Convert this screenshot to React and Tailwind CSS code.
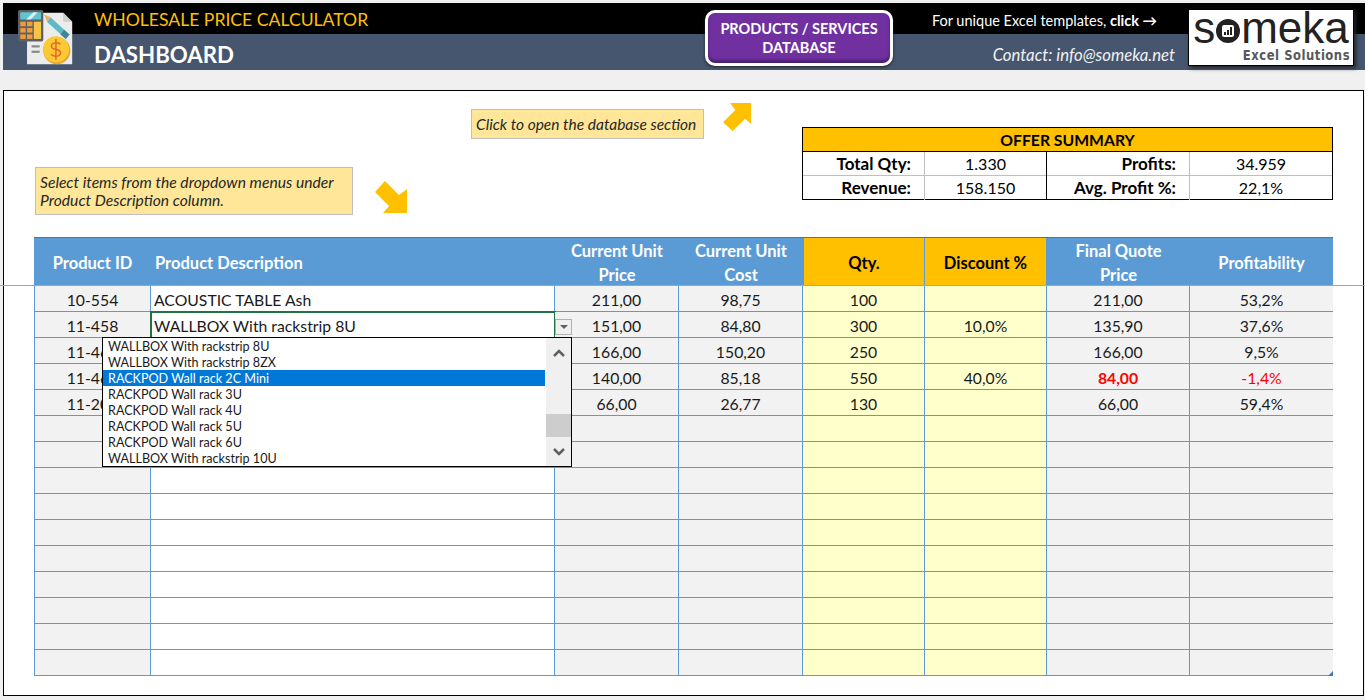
const FONT = "font-['Lato','Liberation_Sans',sans-serif]"

const COLS = 'grid grid-cols-[117px_404px_124px_124px_122px_122px_143px_143px]'

const rows = [
  ['10-554', 'ACOUSTIC TABLE Ash', '211,00', '98,75', '100', '', '211,00', '53,2%'],
  ['11-458', 'WALLBOX With rackstrip 8U', '151,00', '84,80', '300', '10,0%', '135,90', '37,6%'],
  ['11-460', '', '166,00', '150,20', '250', '', '166,00', '9,5%'],
  ['11-463', '', '140,00', '85,18', '550', '40,0%', '84,00', '-1,4%', true],
  ['11-205', '', '66,00', '26,77', '130', '', '66,00', '59,4%'],
]
for (let i = 0; i < 10; i++) rows.push(['', '', '', '', '', '', '', ''])

const options = [
  'WALLBOX With rackstrip 8U',
  'WALLBOX With rackstrip 8ZX',
  'RACKPOD Wall rack 2C Mini',
  'RACKPOD Wall rack 3U',
  'RACKPOD Wall rack 4U',
  'RACKPOD Wall rack 5U',
  'RACKPOD Wall rack 6U',
  'WALLBOX With rackstrip 10U',
]

function AppIcon() {
  return (
    <svg width="56" height="56" viewBox="0 0 62 62" className="shrink-0">
      <path d="M10 3 H50 L60 13 V60 H10 Z" fill="#ececec" />
      <path d="M50 3 L60 13 H50 Z" fill="#cfcfcf" />
      <rect x="0" y="0" width="28" height="35" rx="2" fill="#5d6166" />
      <rect x="2.500" y="2.500" width="23" height="8" fill="#62c4cf" />
      <path d="M9 10.500 L17 2.500 H22 L14 10.500 Z" fill="#d4f0f2" />
      {[0, 1, 2].map((r) =>
        [0, 1].map((c) => <rect key={`${r}${c}`} x={2.500 + c * 7.500} y={13 + r * 7} width="6" height="5" fill="#f29b38" />)
      )}
      <rect x="17.500" y="13" width="8" height="19" fill="#f6c544" />
      <path d="M36 8 L57 27 L53 32 L32 13 Z" fill="#5fb9c6" />
      <path d="M29 5 L36 8 L32 13 Z" fill="#f0b060" />
      <path d="M51 22 L57 27 L53 32 L47 27 Z" fill="#3f8796" />
      <rect x="15" y="39" width="9" height="2.500" fill="#8a8a8a" />
      <rect x="15" y="45" width="9" height="2.500" fill="#8a8a8a" />
      <circle cx="43" cy="45" r="15" fill="#e5a92b" />
      <circle cx="42" cy="43.500" r="14.500" fill="#fbc934" />
      <path d="M47 38 C45 35.500 37 35.500 37 40 C37 45 47 42 47 47.500 C47 52 39 52 36.500 49 M42 32 V55" fill="none" stroke="#e8622c" strokeWidth="1.600" />
    </svg>
  )
}

function CornerArrow({ flip }) {
  const size = flip ? 29 : 33
  return (
    <svg width={size} height={size} viewBox="0 0 33 33" className={flip ? '-rotate-90' : ''}>
      <path d="M0 11 L10 0 L24 14 L32 8 V32 H8 L14 25 Z" fill="#ffc000" />
    </svg>
  )
}

function Cell({ className = '', children }) {
  return <div className={`flex items-start justify-center overflow-hidden whitespace-nowrap border-r border-b border-[#5b9bd5] pt-[5px] text-[15.750px] leading-[18px] text-[#1a1a1a] ${className}`}>{children}</div>
}

function Head({ className = 'bg-[#5b9bd5] text-white', children }) {
  return <div className={`flex items-center justify-center pt-px text-center font-bold text-[16.500px] leading-[24px] ${className}`}>{children}</div>
}

function Dropdown() {
  return (
    <div className="absolute left-[68px] top-[100px] z-10 flex h-[130px] w-[470px] border border-black bg-white">
      <div className="flex-1 pr-px">
        {options.map((o, i) => (
          <div key={o} className={`h-4 pl-[5px] text-[12.600px] leading-[18px] ${i === 2 ? 'bg-[#0078d7] text-white' : 'text-[#1a1a1a]'}`}>{o}</div>
        ))}
      </div>
      <div className="flex w-[25px] flex-col items-center bg-[#f0f0f0]">
        <svg width="14" height="30" viewBox="0 0 14 30" className="shrink-0"><path d="M2 18 L7 13 L12 18" fill="none" stroke="#606060" strokeWidth="2.500" /></svg>
        <div className="mt-[46px] h-[23px] w-full shrink-0 bg-[#cdcdcd]" />
        <svg width="14" height="28" viewBox="0 0 14 28" className="mt-auto shrink-0"><path d="M2 11 L7 16 L12 11" fill="none" stroke="#606060" strokeWidth="2.500" /></svg>
      </div>
    </div>
  )
}

function PriceTable() {
  return (
    <div className="relative mx-[30px] w-[1299px] border-r border-[#4472c4]">
      <div className={`${COLS} h-[49px] border-t border-[#4472c4]`}>
        <Head>Product ID</Head>
        <Head className="justify-start! bg-[#5b9bd5] pl-1 text-white">Product Description</Head>
        <Head>Current Unit<br />Price</Head>
        <Head>Current Unit<br />Cost</Head>
        <Head className="border-x border-[#5b9bd5] bg-[#ffc000] text-black">Qty.</Head>
        <Head className="border-r border-[#5b9bd5] bg-[#ffc000] text-black">Discount %</Head>
        <Head>Final Quote<br />Price</Head>
        <Head>Profitability</Head>
      </div>
      {rows.map((r, i) => (
        <div key={i} className={`${COLS} h-[26px]`}>
          <Cell className="border-l bg-[#f2f2f2]">{r[0]}</Cell>
          <Cell className={`justify-start! bg-white pl-[3px] ${i === 1 ? 'outline-2 -outline-offset-1 outline-[#217346]' : ''}`}>{r[1]}</Cell>
          <Cell className="bg-[#f2f2f2]">{r[2]}</Cell>
          <Cell className="bg-[#f2f2f2]">{r[3]}</Cell>
          <Cell className="bg-[#ffffcc]">{r[4]}</Cell>
          <Cell className="bg-[#ffffcc]">{r[5]}</Cell>
          <Cell className={`bg-[#f2f2f2] ${r[8] ? 'font-bold text-[#ff0000]' : ''}`}>{r[6]}</Cell>
          <Cell className={`bg-[#f2f2f2] border-r-0 ${r[8] ? 'text-[#ff0000]' : ''}`}>{r[7]}</Cell>
        </div>
      ))}
      <div className="absolute bottom-0 right-[-1px] h-[5px] w-[5px] bg-[#4472c4] [clip-path:polygon(100%_0,100%_100%,0_100%)]" />
      <div className="absolute left-[521px] top-[82px] z-10 flex h-[16px] w-[17px] items-center justify-center border border-[#b0b0b0] bg-[#f0f0f0]">
        <div className="h-0 w-0 border-x-[4px] border-t-[4px] border-x-transparent border-t-[#606060]" />
      </div>
      <Dropdown />
    </div>
  )
}

function SummaryRow({ a, b, c, d, last }) {
  return (
    <div className={`grid h-6 grid-cols-[122px_122px_143px_1fr] text-[16px] ${last ? '' : 'border-b border-[#bfbfbf]'}`}>
      <div className="border-r border-[#bfbfbf] pr-[13px] text-right text-[17px] font-bold leading-[24px]">{a}</div>
      <div className="border-r border-black text-center leading-[24px]">{b}</div>
      <div className="border-r border-[#bfbfbf] pr-[13px] text-right text-[17px] font-bold leading-[24px]">{c}</div>
      <div className="text-center leading-[24px]">{d}</div>
    </div>
  )
}

export default function App() {
  return (
    <div className={`relative h-[700px] w-[1365px] overflow-hidden bg-[#f0f0f0] pl-[3px] pt-[3px] ${FONT}`}>
      <header className="flex h-[67px] bg-[linear-gradient(#000_31px,#46566e_31px)]">
        <div className="pl-[15px] pt-[7px]"><AppIcon /></div>
        <div className="w-[631px] pl-[20px]">
          <div className="h-[31px] text-[17.600px] leading-[34px] text-[#ffc000]">WHOLESALE PRICE CALCULATOR</div>
          <div className="text-[22.250px] font-bold leading-[42px] text-white">DASHBOARD</div>
        </div>
        <div className="mt-[7px] flex h-[56px] w-[188px] items-center justify-center rounded-[10px] border-[3px] border-white bg-[#7030a0] text-center text-[14.500px] font-bold leading-[19px] text-white shadow-[inset_0_-3px_3px_#4a1f6e,0_1px_3px_#222]">
          PRODUCTS / SERVICES<br />DATABASE
        </div>
        <div className="w-[295px] pr-[13px] text-right text-white">
          <div className="h-[31px] pr-[18px] text-[14.500px] leading-[35px]">For unique Excel templates, <b>click →</b></div>
          <div className="text-[16.750px] italic leading-[42px] text-[#f2f2f2]">Contact: info@someka.net</div>
        </div>
        <div className="mt-[6px] flex h-[57px] w-[166px] flex-col items-center border border-black bg-white shadow-[2px_2px_4px_#222]">
          <div className="flex h-[36px] items-center font-['Liberation_Sans',sans-serif] text-[44px] leading-[36px] text-[#222]">
            s
            <svg width="24" height="24" viewBox="0 0 24 24" className="mx-px mt-[6px]">
              <circle cx="12" cy="12" r="12" fill="#222" />
              <rect x="6" y="6" width="12" height="12" rx="2" fill="#fff" />
              <path d="M8 16 V13 H10 V16 Z M11 16 V11 H13 V16 Z M14 16 V8 H16 V16 Z" fill="#222" />
            </svg>
            meka
          </div>
          <div className="mt-[1px] origin-right scale-x-[0.86] self-end pr-[3px] font-['DejaVu_Sans',sans-serif] text-[13.500px] font-bold leading-4 tracking-[0.6px] text-[#595959]">Excel Solutions</div>
        </div>
      </header>

      <main className="mt-5 h-[606px] w-[1361px] border border-black bg-white">
        <div className="flex h-[146px]">
          <div className="ml-[31px] mt-[76px] flex w-[436px] items-start">
            <div className="h-12 w-[318px] whitespace-nowrap border border-[#bfbfbf] bg-[#ffe699] px-1 py-[5px] text-[15.650px] italic leading-[18px] text-[#262626]">
              Select items from the dropdown menus under<br />Product Description column.
            </div>
            <div className="ml-[22px] mt-[14px]"><CornerArrow /></div>
          </div>
          <div className="mt-[10px] flex w-[331px] items-start">
            <div className="mt-2 h-[30px] w-[233px] whitespace-nowrap border border-[#bfbfbf] bg-[#ffe699] pl-1 text-[15.500px] italic leading-[28px] text-[#262626]">Click to open the database section</div>
            <div className="ml-[19px] mt-px"><CornerArrow flip /></div>
          </div>
          <div className="mt-9 h-[73px] w-[531px] border border-black text-black">
            <div className="h-6 border-b border-black bg-[#ffc000] text-center text-[15.750px] font-bold leading-[24px]">OFFER SUMMARY</div>
            <SummaryRow a="Total Qty:" b="1.330" c="Profits:" d="34.959" />
            <SummaryRow a="Revenue:" b="158.150" c="Avg. Profit %:" d="22,1%" last />
          </div>
        </div>
        <PriceTable />
      </main>

      {/* freeze pane line */}
      <div className="absolute left-0 top-[285px] h-px w-full bg-[#a6a6a6]" />
    </div>
  )
}
